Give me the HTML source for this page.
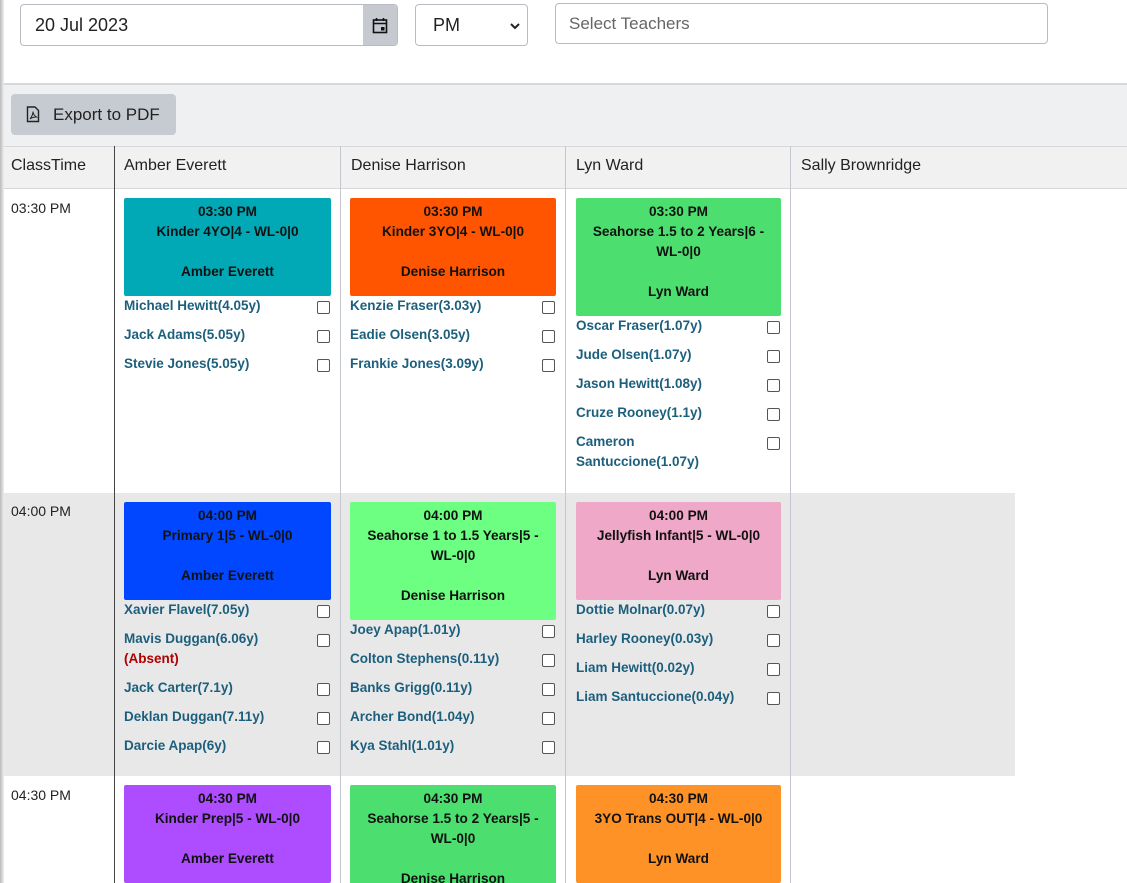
<!DOCTYPE html>
<html><head><meta charset="utf-8"><style>
*{box-sizing:border-box;margin:0;padding:0}
html,body{width:1127px;height:883px;overflow:hidden}
body{background:#fff;font-family:"Liberation Sans",Arial,sans-serif;position:relative}
.a{position:absolute}
.inp{border:1px solid #b8bcc2;border-radius:4px;background:#fff;font-size:18px;color:#222}
.col{position:absolute;width:207px}
.card{border-radius:2px;text-align:center;font-weight:bold;font-size:13.6px;line-height:20px;padding:4px 6px 14px;color:#111}
.st{font-weight:bold;font-size:13.5px;line-height:20px;color:#1c5f7d;margin-bottom:9px;position:relative;padding-right:24px}
.st i{position:absolute;right:1px;top:5px;width:13px;height:13px;border:1.5px solid #555;border-radius:2px;background:#fff}
.ab{color:#b00000}
.hd{font-size:16px;color:#222;top:157px}
.tm{font-size:14px;color:#222;left:11px}
.vl{position:absolute;width:1px;background:#c4c8ce}
</style></head><body>
<div class="a" style="left:0;top:0;width:4px;height:883px;background:linear-gradient(90deg,#bbb,#eee)"></div>
<div class="a inp" style="left:20px;top:4px;width:378px;height:42px;overflow:hidden"><span class="a" style="left:14px;top:10px">20 Jul 2023</span>
<div class="a" style="right:0;top:0;width:34px;height:42px;background:#c6cad0">
<svg class="a" style="left:9px;top:12px" width="16" height="17" viewBox="0 0 16 17"><rect x="1.5" y="3" width="13" height="12.5" fill="none" stroke="#111" stroke-width="1.6"/><line x1="1.5" y1="6.5" x2="14.5" y2="6.5" stroke="#111" stroke-width="1.6"/><line x1="4.5" y1="1" x2="4.5" y2="4" stroke="#111" stroke-width="1.6"/><line x1="11.5" y1="1" x2="11.5" y2="4" stroke="#111" stroke-width="1.6"/><rect x="9" y="10" width="3.5" height="3.5" fill="#111"/></svg></div></div>
<div class="a inp" style="left:415px;top:4px;width:113px;height:42px"><span class="a" style="left:17px;top:10px">PM</span><svg class="a" style="left:94px;top:18px" width="10" height="7" viewBox="0 0 10 7"><path d="M1 1l4 4 4-4" fill="none" stroke="#222" stroke-width="2"/></svg></div>
<div class="a inp" style="left:555px;top:3px;width:493px;height:41px;font-size:17px;color:#666"><span class="a" style="left:13px;top:10px">Select Teachers</span></div>
<div class="a" style="left:4px;top:83px;width:1123px;height:63px;background:#eff0f2;border-top:2px solid #d6d8dc"></div>
<div class="a" style="left:11px;top:94px;width:165px;height:41px;background:#c6cbd1;border-radius:4px;font-size:17px;color:#222">
<svg class="a" style="left:15px;top:12px" width="14" height="17" viewBox="0 0 14 17"><path d="M1.5 1h7.5l3.5 3.5v11h-11z" fill="none" stroke="#222" stroke-width="1.4"/><path d="M4 13c1.5-2 3-5 3-7.5 0 2 1 4 3.5 5.5-2.5 0-5 .8-6.5 2z" fill="none" stroke="#222" stroke-width="1"/></svg>
<span class="a" style="left:42px;top:11px">Export to PDF</span></div>
<div class="a" style="left:4px;top:146px;width:1123px;height:43px;background:#f1f1f1;border-top:1px solid #d6d8dc;border-bottom:1px solid #d6d8dc"></div>
<div class="a hd" style="left:11px">ClassTime</div>
<div class="a hd" style="left:124px">Amber Everett</div>
<div class="a hd" style="left:351px">Denise Harrison</div>
<div class="a hd" style="left:576px">Lyn Ward</div>
<div class="a hd" style="left:801px">Sally Brownridge</div>
<div class="a" style="left:4px;top:493px;width:1011px;height:283px;background:#e8e8e8"></div>
<div class="a" style="left:114px;top:146px;width:1px;height:737px;background:#444"></div>
<div class="vl" style="left:340px;top:146px;height:737px"></div>
<div class="vl" style="left:565px;top:146px;height:737px"></div>
<div class="vl" style="left:790px;top:146px;height:737px"></div>
<div class="a tm" style="top:200px">03:30 PM</div>
<div class="a tm" style="top:503px">04:00 PM</div>
<div class="a tm" style="top:787px">04:30 PM</div>

<div class="col" style="left:124px;top:198px"><div class="card" style="background:#00a9b5">03:30 PM<br>Kinder 4YO|4 - WL-0|0<br><br>Amber Everett</div>
<div class="st">Michael Hewitt(4.05y)<i></i></div><div class="st">Jack Adams(5.05y)<i></i></div><div class="st">Stevie Jones(5.05y)<i></i></div></div>
<div class="col" style="left:350px;top:198px;width:206px"><div class="card" style="background:#ff5500">03:30 PM<br>Kinder 3YO|4 - WL-0|0<br><br>Denise Harrison</div>
<div class="st">Kenzie Fraser(3.03y)<i></i></div><div class="st">Eadie Olsen(3.05y)<i></i></div><div class="st">Frankie Jones(3.09y)<i></i></div></div>
<div class="col" style="left:576px;top:198px;width:205px"><div class="card" style="background:#4cdf6f">03:30 PM<br>Seahorse 1.5 to 2 Years|6 - WL-0|0<br><br>Lyn Ward</div>
<div class="st">Oscar Fraser(1.07y)<i></i></div><div class="st">Jude Olsen(1.07y)<i></i></div><div class="st">Jason Hewitt(1.08y)<i></i></div><div class="st">Cruze Rooney(1.1y)<i></i></div><div class="st">Cameron<br>Santuccione(1.07y)<i></i></div></div>

<div class="col" style="left:124px;top:502px"><div class="card" style="background:#0047ff">04:00 PM<br>Primary 1|5 - WL-0|0<br><br>Amber Everett</div>
<div class="st">Xavier Flavel(7.05y)<i></i></div><div class="st">Mavis Duggan(6.06y)<br><span class="ab">(Absent)</span><i></i></div><div class="st">Jack Carter(7.1y)<i></i></div><div class="st">Deklan Duggan(7.11y)<i></i></div><div class="st">Darcie Apap(6y)<i></i></div></div>
<div class="col" style="left:350px;top:502px;width:206px"><div class="card" style="background:#6cff82">04:00 PM<br>Seahorse 1 to 1.5 Years|5 - WL-0|0<br><br>Denise Harrison</div>
<div class="st">Joey Apap(1.01y)<i></i></div><div class="st">Colton Stephens(0.11y)<i></i></div><div class="st">Banks Grigg(0.11y)<i></i></div><div class="st">Archer Bond(1.04y)<i></i></div><div class="st">Kya Stahl(1.01y)<i></i></div></div>
<div class="col" style="left:576px;top:502px;width:205px"><div class="card" style="background:#efa8c8">04:00 PM<br>Jellyfish Infant|5 - WL-0|0<br><br>Lyn Ward</div>
<div class="st">Dottie Molnar(0.07y)<i></i></div><div class="st">Harley Rooney(0.03y)<i></i></div><div class="st">Liam Hewitt(0.02y)<i></i></div><div class="st">Liam Santuccione(0.04y)<i></i></div></div>

<div class="col" style="left:124px;top:785px"><div class="card" style="background:#ad4dff">04:30 PM<br>Kinder Prep|5 - WL-0|0<br><br>Amber Everett</div></div>
<div class="col" style="left:350px;top:785px;width:206px"><div class="card" style="background:#4cdf6f">04:30 PM<br>Seahorse 1.5 to 2 Years|5 - WL-0|0<br><br>Denise Harrison</div></div>
<div class="col" style="left:576px;top:785px;width:205px"><div class="card" style="background:#ff9226">04:30 PM<br>3YO Trans OUT|4 - WL-0|0<br><br>Lyn Ward</div></div>
</body></html>
